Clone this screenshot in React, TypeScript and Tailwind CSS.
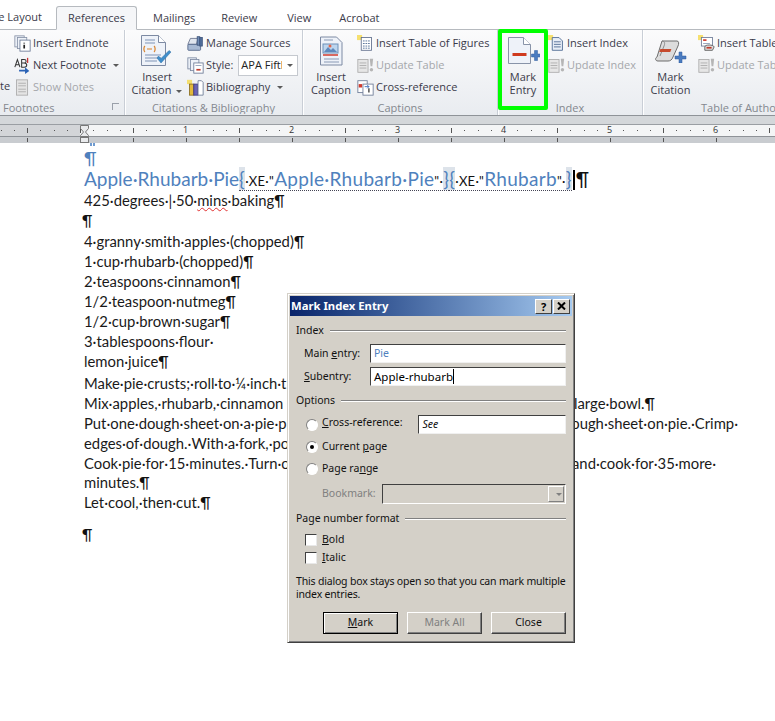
import type { ReactNode } from "react";

const ribbonFont = "font-['Open_Sans',sans-serif] text-[11px] text-[#3b3b4a]";
const dlgFont = "font-['Noto_Sans',sans-serif] text-[10.5px] text-[#111]";

function SmallIcon({ kind }: { kind: string }) {
  return (
    <svg width="17" height="17" viewBox="0 0 20 20" className="shrink-0">
      {kind === "endnote" && (
        <>
          <rect x="1" y="1" width="11" height="13" fill="#eef2f8" stroke="#8893a8" />
          <rect x="4" y="3" width="11" height="13" fill="#eef2f8" stroke="#8893a8" />
          <rect x="7" y="6" width="12" height="13" fill="#fff" stroke="#6c7a96" />
          <path d="M12 9v1M12 11.500v4.500" stroke="#222" strokeWidth="2" />
        </>
      )}
      {kind === "next" && (
        <>
          <path d="M1 12l3-9 3 9M2 9h4M9 3h3c3 0 3 4 0 4h-3zM9 7h3c4 0 4 5 0 5h-3z" fill="none" stroke="#333" strokeWidth="1.200" />
          <path d="M16 1v6" stroke="#c33" strokeWidth="1.500" />
          <path d="M6 15h7v-3l5 4.500-5 3.500v-3h-7z" fill="#2a62b5" />
        </>
      )}
      {kind === "notes" && (
        <>
          <rect x="3" y="1" width="13" height="18" fill="#e4e4e4" stroke="#aaa" />
          <path d="M5 5h9M5 8h9M5 12h9M5 15h9" stroke="#aaa" />
        </>
      )}
      {kind === "sources" && (
        <>
          <path d="M1 11l3-7h9l-2 7z" fill="#dfe5ee" stroke="#64708a" />
          <rect x="1" y="11" width="15" height="7" rx="1" fill="#a8bad4" stroke="#4f6285" />
          <rect x="12" y="2" width="3" height="10" fill="#6e8bb5" stroke="#3e557c" />
          <rect x="15" y="3" width="3" height="10" fill="#53709c" stroke="#3e557c" />
        </>
      )}
      {kind === "style" && (
        <>
          <rect x="1" y="1" width="10" height="13" fill="#eef2f8" stroke="#7d8aa3" />
          <rect x="4" y="3" width="10" height="13" fill="#eef2f8" stroke="#7d8aa3" />
          <rect x="8" y="7" width="11" height="12" fill="#fff" stroke="#6c7a96" />
          <path d="M11 15h5" stroke="#c0392b" strokeWidth="2" />
          <path d="M10 10h7" stroke="#8a9ab5" />
        </>
      )}
      {kind === "biblio" && (
        <>
          <rect x="0" y="1" width="6" height="5" fill="#f5d94e" opacity="0.8" />
          <rect x="3" y="6" width="5" height="13" fill="#e2b93b" stroke="#8a6d1d" />
          <rect x="8" y="6" width="5" height="13" fill="#6a63b5" stroke="#3c3780" />
          <path d="M13 2h4l2 2v15h-6z" fill="#fff" stroke="#6c7a96" />
        </>
      )}
      {kind === "tof" && (
        <>
          <rect x="0" y="0" width="6" height="6" fill="#f5d94e" opacity="0.8" />
          <rect x="5" y="3" width="12" height="15" fill="#fff" stroke="#5f6e8c" />
          <path d="M7 7h8M7 10h8M7 13h8M7 15.500h8" stroke="#47648f" strokeDasharray="2 1" />
        </>
      )}
      {kind === "update" && (
        <>
          <rect x="1" y="3" width="12" height="15" fill="#e6e6e6" stroke="#aaa" />
          <path d="M3 7h8M3 10h8M3 13h8" stroke="#aaa" />
          <path d="M15 2h4l-1 9h-2z" fill="#b5b5b5" />
          <circle cx="17" cy="15" r="2" fill="#b5b5b5" />
        </>
      )}
      {kind === "xref" && (
        <>
          <rect x="1" y="2" width="11" height="14" fill="#fff" stroke="#6c7a96" />
          <rect x="7" y="6" width="12" height="13" fill="#fff" stroke="#6c7a96" />
          <rect x="2" y="6" width="4" height="4" fill="#d13b2e" />
          <path d="M9 9h5l-2-2M14 9l-2 2" stroke="#2a62b5" fill="none" />
          <path d="M14 11v5" stroke="#333" strokeWidth="1.500" />
        </>
      )}
      {kind === "index" && (
        <>
          <rect x="0" y="0" width="6" height="6" fill="#f5d94e" opacity="0.8" />
          <path d="M5 3h8l4 4v11h-12z" fill="#e8eef7" stroke="#47648f" />
          <path d="M7 8h8M7 11h8M7 14h8" stroke="#47648f" />
        </>
      )}
      {kind === "toa" && (
        <>
          <rect x="0" y="0" width="6" height="6" fill="#f5d94e" opacity="0.8" />
          <rect x="4" y="3" width="13" height="10" fill="#fff" stroke="#6c7a96" />
          <path d="M6 6h4" stroke="#d13b2e" strokeWidth="2" />
          <path d="M6 10h8" stroke="#8a9ab5" />
          <path d="M8 14c0-3 10-3 11 0l-2 4H8z" fill="#ddd" stroke="#555" />
          <path d="M10 15h6" stroke="#c0392b" strokeWidth="2" />
        </>
      )}
    </svg>
  );
}

function LargeIcon({ kind }: { kind: string }) {
  if (kind === "citation")
    return (
      <svg width="34" height="34" viewBox="0 0 34 34">
        <path d="M1.500 1.500h17l7 7v23h-24z" fill="#eef2f9" stroke="#7d8aa3" />
        <path d="M18.500 1.500v7h7" fill="#fff" stroke="#7d8aa3" />
        <path d="M5 6h10M5 9h10M5 21h16M5 24h16M5 27h12" stroke="#7f93b5" />
        <path d="M5 12c-1.500 1-1.500 5 0 6M14 12c1.500 1 1.500 5 0 6M7 15h5" fill="none" stroke="#d9822b" strokeWidth="1.200" />
        <path d="M17 24l4 5 10-11-2-1.500-8 8-2.500-2.500z" fill="#3f8ecb" stroke="#2c6ca3" strokeWidth="0.500" />
      </svg>
    );
  if (kind === "caption")
    return (
      <svg width="24" height="30" viewBox="0 0 24 30">
        <path d="M1.500 1h16l5.500 5.500V29h-21.500z" fill="#eef2f9" stroke="#7d8aa3" />
        <path d="M5 4h9M5 23h15M5 26h15" stroke="#8a9ab5" />
        <rect x="4" y="8" width="15" height="9" fill="#bcd5ee" stroke="#6c8fb8" />
        <path d="M5 16l4-5 3 3 2-2 4 4z" fill="#5f89bd" />
        <circle cx="11" cy="10" r="1.500" fill="#e2664b" />
        <path d="M4 19h15" stroke="#d13b2e" strokeWidth="1.500" />
      </svg>
    );
  if (kind === "mark")
    return (
      <svg width="33" height="29" viewBox="0 0 33 29">
        <path d="M1.500 1.500h15l7 7v19h-22z" fill="#eef2f9" stroke="#8893a8" />
        <path d="M16.500 1.500v7h7" fill="#fff" stroke="#8893a8" />
        <rect x="5.500" y="17" width="14" height="3" fill="#cf3a1e" />
        <path d="M27.500 14.500h3v3.500h3v3h-3v3.500h-3v-3.500h-3v-3h3z" fill="#4b7cc0" stroke="#2d5a9c" strokeWidth="0.500" />
      </svg>
    );
  return (
    <svg width="32" height="24" viewBox="0 0 32 24">
      <path d="M7 2h15c2 0 2 3 1 5l-5 11c-1 3-3 4-5 4H3c-3 0-3-3-1-4z" fill="#dcdcdc" stroke="#6d6d6d" />
      <path d="M7 2c3 0 3 3 2 5L5 17" fill="none" stroke="#8b8b8b" />
      <rect x="9" y="10" width="11" height="3" fill="#c64a2c" transform="skewX(-20)" />
      <path d="M24 13h3v4h4v3h-4v4h-3v-4h-4v-3h4z" fill="#4b7cc0" stroke="#2d5a9c" strokeWidth="0.500" />
    </svg>
  );
}

function Caret({ color = "#5a5a5a" }: { color?: string }) {
  return <span className="inline-block w-0 h-0 border-x-[3px] border-x-transparent border-t-[3px] ml-[5px] align-middle" style={{ borderTopColor: color }} />;
}

function SmallBtn({ kind, label, off, caret }: { kind: string; label: string; off?: boolean; caret?: boolean }) {
  return (
    <div className={`h-[22px] flex items-center gap-[2px] whitespace-nowrap ${off ? "text-[#a5a7ab]" : ""}`}>
      <SmallIcon kind={kind} />
      <span>{label}</span>
      {caret && <Caret />}
    </div>
  );
}

function LargeBtn({ icon, lines, caret }: { icon: ReactNode; lines: string[]; caret?: boolean }) {
  return (
    <div className="flex flex-col items-center">
      <div className="h-[39px] flex items-center justify-center">{icon}</div>
      <div className="leading-[13px] text-center whitespace-nowrap">
        <div>{lines[0]}</div>
        <div>
          {lines[1]}
          {caret && <Caret />}
        </div>
      </div>
    </div>
  );
}

function Group({ w, label, children, launcher, labelClass = "justify-center", className = "" }: { w: string; label: string; children: ReactNode; launcher?: boolean; labelClass?: string; className?: string }) {
  return (
    <div className={`${w} shrink-0 h-full flex flex-col border-r border-r-[#c9ced6] shadow-[1px_0_0_#fff] ${className}`}>
      <div className="h-[70px] flex overflow-hidden">{children}</div>
      <div className={`h-[14px] relative flex items-center text-[#84888f] leading-none whitespace-nowrap overflow-hidden ${labelClass}`}>
        {label}
        {launcher && <span className="absolute right-[5px] top-[3px] w-[7px] h-[7px] border-l border-t border-[#9aa0aa]" />}
      </div>
    </div>
  );
}

function Tabs() {
  return (
    <div className={`h-[30px] bg-white flex items-end border-b border-b-[#b6babf] ${ribbonFont}`}>
      <div className="w-[42px] h-[24px] pt-[1px] shrink-0 overflow-hidden flex items-center justify-end whitespace-nowrap">e Layout</div>
      <div className="w-[81px] ml-[14px] h-[24px] pt-[1px] -mb-px bg-[#f5f6f8] border border-[#b6babf] border-b-[#f5f6f8] rounded-t-[3px] flex items-center justify-center">References</div>
      <span className="ml-[16px] pb-[3px]">Mailings</span>
      <span className="ml-[26px] pb-[3px]">Review</span>
      <span className="ml-[30px] pb-[3px]">View</span>
      <span className="ml-[28px] pb-[3px]">Acrobat</span>
    </div>
  );
}

function Ribbon() {
  return (
    <div className={`h-[86px] flex overflow-hidden bg-gradient-to-b from-[#fbfbfc] to-[#e9ecf0] border-b border-b-[#8f9398] ${ribbonFont}`}>
      <Group w="w-[125px]" label="Footnotes" launcher labelClass="justify-start pl-[3px]">
        <div className="pl-[14px] pt-[2px] flex flex-col relative">
          <SmallBtn kind="endnote" label="Insert Endnote" />
          <SmallBtn kind="next" label="Next Footnote" caret />
          <SmallBtn kind="notes" label="Show Notes" off />
          <span className="absolute left-0 top-[48px] text-[#3b3b4a]">te</span>
        </div>
      </Group>
      <Group w="w-[178px]" label="Citations & Bibliography">
        <div className="w-[62px] pl-[2px] pt-[1px] shrink-0">
          <LargeBtn icon={<LargeIcon kind="citation" />} lines={["Insert", "Citation"]} caret />
        </div>
        <div className="pt-[2px] flex flex-col">
          <SmallBtn kind="sources" label="Manage Sources" />
          <div className="h-[22px] flex items-center gap-[2px] whitespace-nowrap">
            <SmallIcon kind="style" />
            <span>Style:</span>
            <div className="ml-[3px] w-[60px] h-[21px] bg-white border border-[#c5c9cf] flex items-center justify-between pl-[2px] pr-[4px] overflow-hidden">
              <span className="w-[46px] overflow-hidden text-[#222]">APA Fifth</span>
              <Caret />
            </div>
          </div>
          <SmallBtn kind="biblio" label="Bibliography" caret />
        </div>
      </Group>
      <Group w="w-[195px]" label="Captions">
        <div className="w-[54px] pt-[1px] pl-[2px] shrink-0">
          <LargeBtn icon={<LargeIcon kind="caption" />} lines={["Insert", "Caption"]} />
        </div>
        <div className="pt-[2px] flex flex-col">
          <SmallBtn kind="tof" label="Insert Table of Figures" />
          <SmallBtn kind="update" label="Update Table" off />
          <SmallBtn kind="xref" label="Cross-reference" />
        </div>
      </Group>
      <Group w="w-[145px]" label="Index">
        <div className="relative w-[50px] h-[70px] pt-[1px] flex justify-center shrink-0">
          <LargeBtn icon={<LargeIcon kind="mark" />} lines={["Mark", "Entry"]} />
        </div>
        <div className="pt-[2px] flex flex-col">
          <SmallBtn kind="index" label="Insert Index" />
          <SmallBtn kind="update" label="Update Index" off />
        </div>
      </Group>
      <Group w="w-[132px]" label="Table of Authorities" labelClass="justify-start pl-[58px]" className="border-r-0 shadow-none">
        <div className="w-[55px] pt-[1px] shrink-0">
          <LargeBtn icon={<LargeIcon kind="toa" />} lines={["Mark", "Citation"]} />
        </div>
        <div className="pt-[2px] flex flex-col">
          <SmallBtn kind="toa" label="Insert Table of Authorities" />
          <SmallBtn kind="update" label="Update Table" off />
        </div>
      </Group>
    </div>
  );
}

function Ruler() {
  const marks = [];
  for (let k = -6; k <= 53; k++) {
    if (k > 0 && k % 8 === 0) continue;
    const big = k % 4 === 0;
    marks.push(<rect key={k} x={Math.round(80 + k * 13.25)} y={big ? 3 : 5} width="1" height={big ? 5 : 1} fill="#555" />);
  }
  return (
    <div className="h-[27px] bg-[#d4d7da] pt-[8px]">
      <div className="relative h-[19px] bg-[#f4f5f6] border-t border-t-[#9a9ea3]">
        <svg width="775" height="18" viewBox="0 0 775 18" className="block">
          <rect x="0" y="0" width="80" height="11" fill="#d3d5d8" />
          <rect x="0" y="12" width="775" height="6" fill="#c9ccd0" />
          <rect x="0" y="11" width="775" height="1" fill="#8f9398" />
          {marks}
          <path d="M80.500 0.500h8v3l-3 3.500 3 3.500v1h-8v-1l3-3.500-3-3.500z" fill="#e9eaec" stroke="#777" />
          <rect x="80.500" y="12.500" width="8" height="5" fill="#e9eaec" stroke="#777" />
          <path d="M27.500 13v4M133.500 13v4M186.500 13v4M239.500 13v4M292.500 13v4M345.500 13v4M398.500 13v4M451.500 13v4M504.500 13v4M557.500 13v4M610.500 13v4M663.500 13v4M716.500 13v4" stroke="#555" />
        </svg>
        {[1, 2, 3, 4, 5, 6].map((n) => (
          <span key={n} className="absolute top-[-1px] text-[9px] leading-[12px] text-[#333] font-['Open_Sans',sans-serif]" style={{ left: 183 + (n - 1) * 106 }}>
            {n}
          </span>
        ))}
      </div>
    </div>
  );
}

function Mark({ blue }: { blue?: boolean }) {
  return <span className={blue ? "text-[#4f81bd]" : "text-[#111]"}>¶</span>;
}

function Field({ children }: { children: ReactNode }) {
  return (
    <span className="border-b border-dotted border-b-[#445] tracking-[0.3px]">
      <span className="text-[#4f81bd] bg-[#dde3ea]">{"{"}</span>
      {children}
      <span className="text-[#4f81bd] bg-[#dde3ea]">{"}"}</span>
    </span>
  );
}

function Small({ children }: { children: ReactNode }) {
  return <span className="text-[13px] text-[#111]">{children}</span>;
}

function Line({ h = "h-5", children }: { h?: string; children: ReactNode }) {
  return <div className={`${h} leading-5 whitespace-nowrap`}>{children}</div>;
}

function Doc() {
  return (
    <div className="relative pl-[84px] pt-[5px] bg-white h-[578px] font-['Lato',sans-serif] text-[14.83px] text-[#1a1a1a]">
      <span className="absolute left-[90px] top-0 w-[5px] h-[3px] border-x-2 border-x-[#6f9bd0]" />
      <div className="h-[20px] leading-5 text-[18px]"><Mark blue /></div>
      <div className="h-[22px] leading-[22px] text-[19px] text-[#4f81bd] whitespace-nowrap">
        Apple·Rhubarb·Pie
        <Field>
          <Small>·XE·"</Small>Apple·Rhubarb·Pie<Small>"·</Small>
        </Field>
        <Field>
          <Small>·XE·"</Small>Rhubarb<Small>"·</Small>
        </Field>
        <span className="inline-block w-[2px] h-[20px] bg-black align-[-4px] mx-[1px]" />
        <Mark />
      </div>
      <Line>
        425·degrees·|·50·<span className="underline decoration-wavy decoration-[#e03030] decoration-1">mins</span>·baking<Mark />
      </Line>
      <div className="-ml-[2px]"><Line h="h-[21px]"><Mark /></Line></div>
      <Line>4·granny·smith·apples·(chopped)<Mark /></Line>
      <Line>1·cup·rhubarb·(chopped)<Mark /></Line>
      <Line>2·teaspoons·cinnamon<Mark /></Line>
      <Line>1/2·teaspoon·nutmeg<Mark /></Line>
      <Line>1/2·cup·brown·sugar<Mark /></Line>
      <Line>3·tablespoons·flour·</Line>
      <Line>lemon·juice<Mark /></Line>
      <div className="h-[2px]" />
      <Line>Make·pie·crusts;·roll·to·¼·inch·t</Line>
      <Line>
        <div className="flex justify-between w-[571px]">
          <span>Mix·apples,·rhubarb,·cinnamon</span>
          <span>large·bowl.<Mark /></span>
        </div>
      </Line>
      <Line>
        <div className="flex justify-between w-[654px]">
          <span>Put·one·dough·sheet·on·a·pie·p</span>
          <span>ough·sheet·on·pie.·Crimp·</span>
        </div>
      </Line>
      <Line>edges·of·dough.·With·a·fork,·po</Line>
      <Line h="h-[19px]">
        <div className="flex justify-between w-[632px]">
          <span>Cook·pie·for·15·minutes.·Turn·o</span>
          <span>and·cook·for·35·more·</span>
        </div>
      </Line>
      <Line>minutes.<Mark /></Line>
      <Line>Let·cool,·then·cut.<Mark /></Line>
      <div className="h-[12px]" />
      <div className="-ml-[2px]"><Line><Mark /></Line></div>
    </div>
  );
}

function Section({ title }: { title: string }) {
  return (
    <div className="flex items-center gap-[6px] h-[14px] whitespace-nowrap">
      <span>{title}</span>
      <div className="flex-1 h-[2px] border-t border-t-[#808080] border-b border-b-white" />
    </div>
  );
}

function Sunken({ children, className = "" }: { children?: ReactNode; className?: string }) {
  return (
    <div className={`h-[19px] bg-white border border-t-[#404040] border-l-[#404040] border-r-[#f0f0f0] border-b-[#f0f0f0] flex items-center px-[3px] whitespace-nowrap ${className}`}>
      {children}
    </div>
  );
}

function Radio({ checked }: { checked?: boolean }) {
  return (
    <span className="relative w-[12px] h-[12px] rounded-full bg-white border border-t-[#808080] border-l-[#808080] border-r-white border-b-white flex items-center justify-center shrink-0">
      {checked && <span className="w-[4px] h-[4px] rounded-full bg-black" />}
    </span>
  );
}

function Check() {
  return <span className="w-[12px] h-[12px] bg-white border border-t-[#404040] border-l-[#404040] border-r-[#e8e8e8] border-b-[#e8e8e8] shrink-0" />;
}

function DlgButton({ children, def, off }: { children: ReactNode; def?: boolean; off?: boolean }) {
  return (
    <div className={`w-[75px] h-[22px] flex items-center justify-center bg-[#d4d0c8] border ${def ? "border-black shadow-[inset_1px_1px_0_#fff,inset_-1px_-1px_0_#808080]" : "border-t-white border-l-white border-r-[#404040] border-b-[#404040] shadow-[inset_-1px_-1px_0_#808080]"} ${off ? "text-[#808080]" : ""}`}>
      {children}
    </div>
  );
}

function TitleBtn({ children }: { children: ReactNode }) {
  return (
    <div className="w-[17px] h-[15px] bg-[#d4d0c8] border border-t-white border-l-white border-r-[#404040] border-b-[#404040] flex items-center justify-center text-[11px] font-bold leading-none text-black">
      {children}
    </div>
  );
}

function Dialog() {
  return (
    <div className={`absolute left-[287px] top-[293px] w-[288px] h-[350px] bg-[#d4d0c8] border border-t-[#d4d0c8] border-l-[#d4d0c8] border-r-[#404040] border-b-[#404040] shadow-[inset_1px_1px_0_#fff,inset_-1px_-1px_0_#808080] p-[2px] ${dlgFont}`}>
      <div className="h-[20px] bg-gradient-to-r from-[#0a246a] to-[#a6caf0] flex items-center justify-between pl-[1px] pr-[2px] text-white font-bold text-[11.3px] whitespace-nowrap">
        Mark Index Entry
        <div className="flex gap-[1px]">
          <TitleBtn>?</TitleBtn>
          <TitleBtn>
            <svg width="9" height="8" viewBox="0 0 9 8">
              <path d="M1 0.500l7 7M8 0.500l-7 7" stroke="#000" strokeWidth="2" />
            </svg>
          </TitleBtn>
        </div>
      </div>
      <div className="px-[6px] pt-[8px]">
        <Section title="Index" />
        <div className="pl-[8px] mt-[6px] flex flex-col gap-[4px]">
          <div className="flex items-center h-[19px]">
            <span className="w-[66px]">Main <u>e</u>ntry:</span>
            <Sunken className="w-[196px] text-[#4f81bd]">Pie</Sunken>
          </div>
          <div className="flex items-center h-[19px]">
            <span className="w-[66px]"><u>S</u>ubentry:</span>
            <Sunken className="w-[196px] text-black text-[11.5px]">Apple-rhubarb<span className="w-px h-[15px] bg-black" /></Sunken>
          </div>
        </div>
        <div className="mt-[8px]"><Section title="Options" /></div>
        <div className="pl-[10px] mt-[7px]">
          <div className="flex items-center h-[19px] gap-[4px]">
            <Radio />
            <span className="w-[94px] whitespace-nowrap -mt-[3px]"><u>C</u>ross-reference:</span>
            <Sunken className="w-[150px] italic">See</Sunken>
          </div>
          <div className="flex items-center h-[14px] gap-[4px] mt-[6px]">
            <Radio checked />
            <span>Current <u>p</u>age</span>
          </div>
          <div className="flex items-center h-[14px] gap-[4px] mt-[8px]">
            <Radio />
            <span>Page ra<u>n</u>ge</span>
          </div>
          <div className="flex items-center h-[20px] mt-[8px] pl-[16px]">
            <span className="w-[60px] text-[#808080]">Bookmark:</span>
            <div className="w-[184px] h-[20px] bg-[#d4d0c8] border border-t-[#404040] border-l-[#404040] border-r-white border-b-white flex justify-end p-px">
              <div className="w-[16px] h-[16px] bg-[#d4d0c8] border border-t-white border-l-white border-r-[#808080] border-b-[#808080] flex items-center justify-center">
                <Caret color="#808080" />
              </div>
            </div>
          </div>
        </div>
        <div className="mt-[8px]"><Section title="Page number format" /></div>
        <div className="pl-[9px] mt-[8px] flex flex-col gap-[6px]">
          <div className="flex items-center h-[12px] gap-[5px]"><Check /><span><u>B</u>old</span></div>
          <div className="flex items-center h-[12px] gap-[5px]"><Check /><span><u>I</u>talic</span></div>
        </div>
        <p className="mt-[11px] leading-[13px] whitespace-nowrap tracking-[-0.18px]">
          This dialog box stays open so that you can mark multiple
          <br />
          index entries.
        </p>
        <div className="flex justify-end gap-[9px] mt-[11px]">
          <DlgButton def><span><u>M</u>ark</span></DlgButton>
          <DlgButton off>Mark All</DlgButton>
          <DlgButton>Close</DlgButton>
        </div>
      </div>
    </div>
  );
}

export default function App() {
  return (
    <div className="relative w-[775px] h-[721px] overflow-hidden bg-white">
      <Tabs />
      <Ribbon />
      <Ruler />
      <Doc />
      <Dialog />
      {/* green highlight box drawn over the ribbon */}
      <div className="absolute left-[498px] top-[29px] w-[50px] h-[81px] border-[4px] border-[#00ff00] rounded-[2px]" />
    </div>
  );
}
